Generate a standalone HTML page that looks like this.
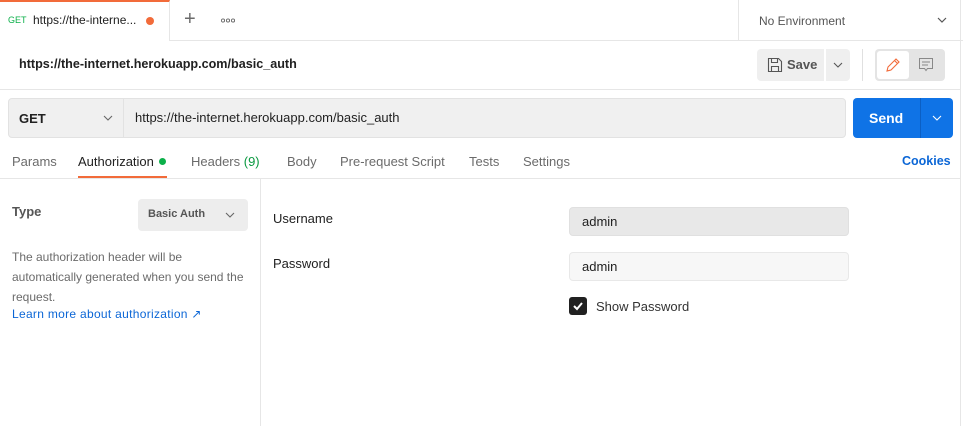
<!DOCTYPE html><html><head><style>
*{margin:0;padding:0;box-sizing:border-box}
body{width:963px;height:426px;background:#fff;font-family:"Liberation Sans",sans-serif;color:#212121;position:relative;overflow:hidden;font-size:13px}
.a{position:absolute}
.t{white-space:nowrap}
</style></head><body>
<div class="a" style="left:0;top:0;width:963px;height:41px;border-bottom:1px solid #e6e6e6"></div>
<div class="a" style="left:0;top:0;width:170px;height:41px;background:#fff;border-top:2px solid #f26b3a;border-right:1px solid #e6e6e6"></div>
<div class="a t" style="left:8px;top:15px;font-size:9px;color:#0cb04a">GET</div>
<div class="a t" style="left:33px;top:13px;font-size:12px">https://the-interne...</div>
<div class="a" style="left:146px;top:17px;width:8px;height:8px;border-radius:50%;background:#f26b3a"></div>
<div class="a t" style="left:184px;top:8px;font-size:20px;color:#6b6b6b;font-weight:300">+</div>
<svg class="a" style="left:221px;top:18px" width="14" height="5"><circle cx="2" cy="2.5" r="1.6" fill="none" stroke="#666" stroke-width="0.9"/><circle cx="7" cy="2.5" r="1.6" fill="none" stroke="#666" stroke-width="0.9"/><circle cx="12" cy="2.5" r="1.6" fill="none" stroke="#666" stroke-width="0.9"/></svg>
<div class="a" style="left:738px;top:0;height:41px;border-left:1px solid #e6e6e6"></div>
<div class="a t" style="left:759px;top:14px;font-size:12px;color:#555">No Environment</div>
<svg class="a" style="left:937px;top:16px" width="10" height="8"><path d="M1 2l4 4 4-4" fill="none" stroke="#555" stroke-width="1.2"/></svg>
<div class="a" style="left:960px;top:0;height:426px;border-left:1px solid #e6e6e6"></div>
<div class="a t" style="left:19px;top:57px;font-size:12.6px;font-weight:bold">https://the-internet.herokuapp.com/basic_auth</div>
<div class="a" style="left:757px;top:49px;width:67px;height:32px;background:#efefef;border-radius:4px 0 0 4px"></div>
<svg class="a" style="left:767px;top:57px" width="16" height="16"><path d="M1.5 1.5h10l3 3v10h-13z M4.5 1.5v4h6v-4 M4.5 14.5v-5h7v5" fill="none" stroke="#555" stroke-width="1.1"/></svg>
<div class="a t" style="left:787px;top:57px;font-size:13px;font-weight:bold;color:#555">Save</div>
<div class="a" style="left:826px;top:49px;width:24px;height:32px;background:#efefef;border-radius:0 4px 4px 0"></div>
<svg class="a" style="left:833px;top:61px" width="10" height="8"><path d="M1 2l4 4 4-4" fill="none" stroke="#555" stroke-width="1.1"/></svg>
<div class="a" style="left:862px;top:49px;height:32px;border-left:1px solid #e0e0e0"></div>
<div class="a" style="left:875px;top:49px;width:70px;height:32px;background:#e4e4e4;border-radius:4px"></div>
<div class="a" style="left:877px;top:51px;width:32px;height:28px;background:#fff;border-radius:3px"></div>
<svg class="a" style="left:885px;top:57px" width="16" height="16"><path d="M2 14l1-4 8-8 3 3-8 8z M9.5 3.5l3 3" fill="none" stroke="#f26b3a" stroke-width="1.1"/></svg>
<svg class="a" style="left:918px;top:57px" width="16" height="16"><path d="M1.5 1.5h13v10h-5l-1.5 2-1.5-2h-5z M4 5h8 M4 8h6" fill="none" stroke="#888" stroke-width="1"/></svg>
<div class="a" style="left:0;top:89px;width:960px;border-top:1px solid #e6e6e6"></div>
<div class="a" style="left:8px;top:98px;width:838px;height:40px;background:#f0f0f0;border:1px solid #e2e2e2;border-radius:4px"></div>
<div class="a" style="left:123px;top:99px;height:38px;border-left:1px solid #e2e2e2"></div>
<div class="a t" style="left:19px;top:111px;font-size:13px;font-weight:bold">GET</div>
<svg class="a" style="left:103px;top:114px" width="10" height="8"><path d="M1 2l4 4 4-4" fill="none" stroke="#666" stroke-width="1.1"/></svg>
<div class="a t" style="left:135px;top:110px;font-size:13px">https://the-internet.herokuapp.com/basic_auth</div>
<div class="a" style="left:853px;top:98px;width:100px;height:40px;background:#0f73e6;border-radius:4px"></div>
<div class="a" style="left:920px;top:98px;height:40px;border-left:1px solid #0b5fc4"></div>
<div class="a t" style="left:869px;top:110px;font-size:14px;font-weight:bold;color:#fff">Send</div>
<svg class="a" style="left:932px;top:114px" width="10" height="8"><path d="M1 2l4 4 4-4" fill="none" stroke="#fff" stroke-width="1.1"/></svg>
<div class="a t" style="left:12px;top:154px;color:#6b6b6b">Params</div>
<div class="a t" style="left:78px;top:154px;color:#212121">Authorization</div>
<div class="a" style="left:159px;top:158px;width:7px;height:7px;border-radius:50%;background:#0cb04a"></div>
<div class="a" style="left:78px;top:176px;width:89px;height:2px;background:#f26b3a"></div>
<div class="a t" style="left:191px;top:154px;color:#6b6b6b">Headers <span style="color:#0a9940">(9)</span></div>
<div class="a t" style="left:287px;top:154px;color:#6b6b6b">Body</div>
<div class="a t" style="left:340px;top:154px;color:#6b6b6b">Pre-request Script</div>
<div class="a t" style="left:469px;top:154px;color:#6b6b6b">Tests</div>
<div class="a t" style="left:523px;top:154px;color:#6b6b6b">Settings</div>
<div class="a t" style="left:902px;top:154px;color:#0b66d6;font-weight:bold;font-size:12.5px">Cookies</div>
<div class="a" style="left:0;top:178px;width:960px;border-top:1px solid #e6e6e6"></div>
<div class="a" style="left:260px;top:179px;height:247px;border-left:1px solid #e6e6e6"></div>
<div class="a t" style="left:12px;top:204px;font-weight:bold;color:#555">Type</div>
<div class="a" style="left:138px;top:199px;width:110px;height:32px;background:#ededed;border-radius:4px"></div>
<div class="a t" style="left:148px;top:208px;font-size:11px;font-weight:bold;color:#555">Basic Auth</div>
<svg class="a" style="left:225px;top:211px" width="10" height="8"><path d="M1 2l4 4 4-4" fill="none" stroke="#666" stroke-width="1.1"/></svg>
<div class="a" style="left:12px;top:247px;width:240px;font-size:12px;line-height:20px;color:#6b6b6b">The authorization header will be automatically generated when you send the request.</div>
<div class="a t" style="left:12px;top:307px;font-size:12px;color:#0b66d6;letter-spacing:0.3px">Learn more about authorization ↗</div>
<div class="a t" style="left:273px;top:211px">Username</div>
<div class="a" style="left:569px;top:207px;width:280px;height:29px;background:#e8e8e8;border:1px solid #e0e0e0;border-radius:4px"></div>
<div class="a t" style="left:582px;top:214px">admin</div>
<div class="a t" style="left:273px;top:256px">Password</div>
<div class="a" style="left:569px;top:252px;width:280px;height:29px;background:#f7f7f7;border:1px solid #e8e8e8;border-radius:4px"></div>
<div class="a t" style="left:582px;top:259px">admin</div>
<div class="a" style="left:569px;top:297px;width:18px;height:18px;background:#212121;border-radius:3px"></div>
<svg class="a" style="left:571px;top:299px" width="14" height="14"><path d="M3 7l3 3 5-6" fill="none" stroke="#fff" stroke-width="2"/></svg>
<div class="a t" style="left:596px;top:299px;color:#333">Show Password</div>
</body></html>
